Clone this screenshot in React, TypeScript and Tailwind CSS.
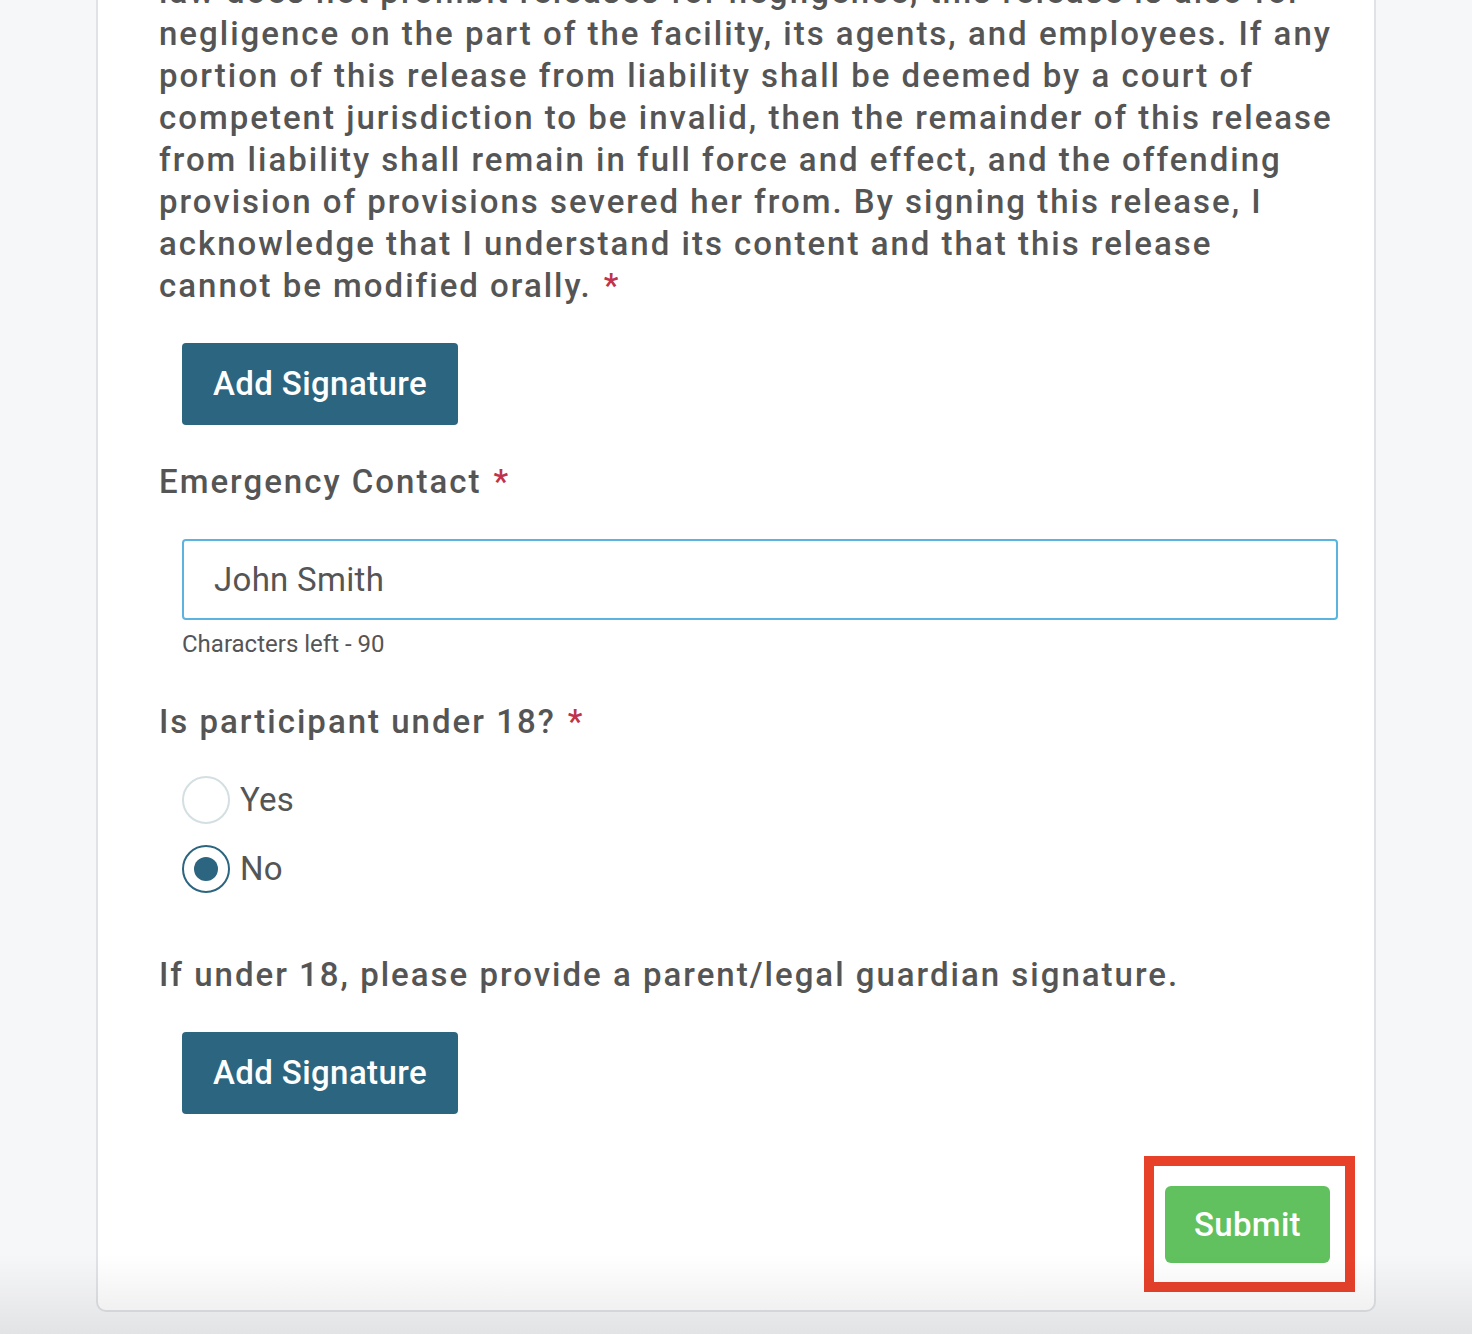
import { useState } from "react";

const font = { fontFamily: "Roboto, 'Noto Sans', sans-serif" };

const releaseLines = [
  "law does not prohibit releases for negligence, this release is also for",
  "negligence on the part of the facility, its agents, and employees. If any",
  "portion of this release from liability shall be deemed by a court of",
  "competent jurisdiction to be invalid, then the remainder of this release",
  "from liability shall remain in full force and effect, and the offending",
  "provision of provisions severed her from. By signing this release, I",
  "acknowledge that I understand its content and that this release",
  "cannot be modified orally.",
];

function Required() {
  return <span className="ml-3 text-[#c0334d]">*</span>;
}

function SignatureButton() {
  return (
    <button
      type="button"
      className="ml-[23px] h-[82px] w-[276px] rounded-[4px] bg-[#2c6580] text-[33px] font-medium tracking-[0.4px] text-white"
    >
      Add Signature
    </button>
  );
}

function Radio({ label, checked, onClick }: { label: string; checked: boolean; onClick: () => void }) {
  return (
    <button type="button" onClick={onClick} className="ml-[23px] flex h-[48px] items-center gap-[10px]">
      <span
        className={
          checked
            ? "flex h-[48px] w-[48px] items-center justify-center rounded-full border-2 border-[#2c6580]"
            : "flex h-[48px] w-[48px] items-center justify-center rounded-full border-2 border-[#d3dfe2]"
        }
      >
        {checked && <span className="h-[24px] w-[24px] rounded-full bg-[#2c6580]" />}
      </span>
      <span className="text-[33px] leading-[48px] tracking-[0.3px] text-[#555]">{label}</span>
    </button>
  );
}

export default function App() {
  const [name, setName] = useState("John Smith");
  const [under18, setUnder18] = useState(false);

  return (
    <div className="relative min-h-[1334px] overflow-hidden bg-[#f6f7f9]" style={font}>
      <div className="ml-[96px] w-[1280px] rounded-b-[10px] border-2 border-t-0 border-[#e0e2e6] bg-white pb-[47px] pl-[61px] pr-[20px]">
        <p className="-mt-[29px] whitespace-nowrap text-[33px] font-medium leading-[42px] tracking-[2px] text-[#555]">
          {releaseLines.map((line, i) => (
            <span key={i} className="block">
              {line}
              {i === releaseLines.length - 1 && <Required />}
            </span>
          ))}
        </p>

        <div className="mt-[36px]">
          <SignatureButton />
        </div>

        <label className="mt-[36px] block text-[33px] font-medium leading-[42px] tracking-[2px] text-[#555]">
          Emergency Contact
          <Required />
        </label>

        <div className="ml-[23px] mr-[16px] mt-[36px]">
          <input
            autoFocus
            value={name}
            onChange={(e) => setName(e.target.value)}
            className="h-[81px] w-full rounded-[4px] border-2 border-[#5bb4e0] px-[30px] text-[33px] tracking-[0.3px] text-[#555] caret-[#333] outline-none"
          />
          <div className="mt-[10px] text-[24px] leading-[28px] text-[#555]">
            Characters left - {100 - name.length}
          </div>
        </div>

        <div className="mt-[43px] text-[33px] font-medium leading-[42px] tracking-[2px] text-[#555]">
          Is participant under 18?
          <Required />
        </div>

        <div className="mt-[33px] flex flex-col gap-[21px]">
          <Radio label="Yes" checked={under18} onClick={() => setUnder18(true)} />
          <Radio label="No" checked={!under18} onClick={() => setUnder18(false)} />
        </div>

        <div className="mt-[61px] text-[33px] font-medium leading-[42px] tracking-[2px] text-[#555]">
          If under 18, please provide a parent/legal guardian signature.
        </div>

        <div className="mt-[36px]">
          <SignatureButton />
        </div>

        <div className="mt-[72px] flex justify-end pr-[24px]">
          <div className="relative">
            <button
              type="button"
              className="h-[77px] w-[165px] rounded-[6px] bg-[#61c15e] text-[33px] font-medium tracking-[0.3px] text-white"
            >
              Submit
            </button>
            <div className="pointer-events-none absolute -bottom-[29px] -left-[21px] -right-[25px] -top-[30px] border-[10px] border-[#e8412a]" />
          </div>
        </div>
      </div>

      <div className="pointer-events-none absolute inset-x-0 bottom-0 h-[80px] bg-gradient-to-b from-transparent to-black/[0.08]" />
    </div>
  );
}
